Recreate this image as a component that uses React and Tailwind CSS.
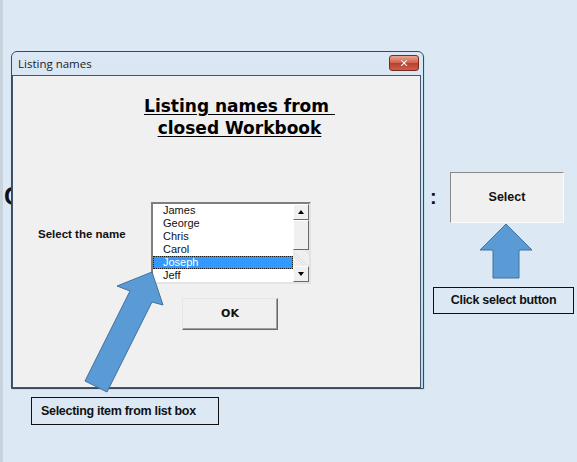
import React from "react";

const names = ["James", "George", "Chris", "Carol", "Joseph", "Jeff"];

const ListBox = () => (
  <div className="flex shrink-0 w-[160px] h-[82px] bg-white border-2 border-t-[#7f7f7f] border-l-[#7f7f7f] border-r-[#e3e3e3] border-b-[#e3e3e3]">
    <div className="flex-1 flex flex-col font-['Liberation_Sans',sans-serif] text-[11px]">
      {names.map((n) => (
        <div
          key={n}
          className={
            n === "Joseph"
              ? "h-[13px] leading-[11px] pl-[9px] bg-[#3399ff] text-white border border-dotted border-[#1a1a1a]"
              : "h-[13px] leading-[13px] pl-[10px] text-[#111]"
          }
        >
          {n}
        </div>
      ))}
    </div>
    <div className="w-[16px] flex flex-col bg-[repeating-linear-gradient(45deg,#f4f4f4_0px,#f4f4f4_1px,#e4e4e4_1px,#e4e4e4_2px)]">
      <div className="h-[16px] flex items-center justify-center bg-[#f0f0f0] border border-t-white border-l-white border-r-[#6a6a6a] border-b-[#6a6a6a]">
        <div className="w-0 h-0 border-l-[3px] border-r-[3px] border-b-[4px] border-l-transparent border-r-transparent border-b-black" />
      </div>
      <div className="h-[30px] bg-[#f0f0f0] border border-t-white border-l-white border-r-[#6a6a6a] border-b-[#6a6a6a]" />
      <div className="flex-1" />
      <div className="h-[16px] flex items-center justify-center bg-[#f0f0f0] border border-t-white border-l-white border-r-[#6a6a6a] border-b-[#6a6a6a]">
        <div className="w-0 h-0 border-l-[3px] border-r-[3px] border-t-[4px] border-l-transparent border-r-transparent border-t-black" />
      </div>
    </div>
  </div>
);

const Dialog = () => (
  <div className="absolute left-[11px] top-[51px] w-[413px] h-[338px] flex flex-col rounded-t-[6px] border border-[#3a4a5e] bg-[linear-gradient(to_bottom,#dbe7f5,#c3d6ed)] shadow-[1px_1px_0_#bfe3ec]">
    <div className="relative h-[23px] flex items-center pl-[6px] text-[11.5px] text-[#1b1b1b] font-['Open_Sans',sans-serif]">
      Listing names
      <div className="absolute right-[4px] top-[3px] w-[30px] h-[16px] rounded-[3px] border border-[#7a2b20] bg-[linear-gradient(to_bottom,#eaa494,#d1604a_50%,#b8402d_51%,#c9604a)] flex items-center justify-center">
        <span className="text-white text-[11px] font-bold leading-none font-['DejaVu_Sans',sans-serif] [text-shadow:0_0_1px_#6b1a10]">
          ✕
        </span>
      </div>
    </div>
    <div className="flex-1 mr-[2px] bg-[#f0f0f0] border border-[#44546a] flex flex-col">
      <div className="pt-[19px] pl-[46px] text-center font-['DejaVu_Sans',sans-serif] font-bold text-[17px] leading-[22px] text-black underline underline-offset-[2px]">
        <div>Listing names from&nbsp;</div>
        <div>closed Workbook</div>
      </div>
      <div className="flex mt-[63px]">
        <div className="w-[138px] shrink-0 pl-[25px] pt-[24px] whitespace-nowrap text-[11.5px] font-bold font-['Liberation_Sans',sans-serif] text-[#111]">
          Select the name
        </div>
        <ListBox />
      </div>
      <button className="mt-[14px] ml-[169px] w-[96px] h-[32px] bg-[#f0f0f0] border border-t-[#e6e6e6] border-l-[#e6e6e6] border-r-[#6a6a6a] border-b-[#6a6a6a] shadow-[inset_-1px_-1px_0_#a0a0a0] text-[11px] font-bold font-['DejaVu_Sans',sans-serif] text-[#111]">
        OK
      </button>
    </div>
  </div>
);

export default function App() {
  return (
    <div className="relative w-[577px] h-[462px] overflow-hidden bg-[#dce9f5] font-['Liberation_Sans',sans-serif]">
      <div className="absolute left-0 top-0 w-[3px] h-full bg-[#c9d3dd]" />
      <span className="absolute left-[4px] top-[184px] text-[25px] font-bold text-[#111] leading-none">
        C
      </span>
      <Dialog />
      <span className="absolute left-[430px] top-[187px] text-[20px] font-bold text-[#111] leading-none">
        :
      </span>
      <div className="absolute left-[450px] top-[172px] w-[114px] h-[51px] flex items-center justify-center bg-[#f0f0f0] border border-t-[#8a8a8a] border-l-[#8a8a8a] border-r-[#fafafa] border-b-[#fafafa] text-[12.5px] font-bold text-[#111]">
        Select
      </div>
      <div className="absolute left-[433px] top-[287px] w-[141px] h-[27px] flex items-center justify-center border border-[#111] text-[12.5px] font-bold text-[#111] tracking-[-0.3px]">
        Click select button
      </div>
      <div className="absolute left-[31px] top-[397px] w-[188px] h-[28px] flex items-center pl-[9px] border border-[#111] text-[12.5px] font-bold text-[#111] tracking-[-0.3px]">
        Selecting item from list box
      </div>
      <svg className="absolute inset-0 pointer-events-none" width="577" height="462" viewBox="0 0 577 462">
        <polygon
          points="152,272 163,305 152,302 107,392 85,381 130,291 117,286"
          fill="#5b9bd5"
          stroke="#41719c"
          strokeWidth="1"
        />
        <polygon
          points="506,224 532,250 519,250 519,278 493,278 493,250 480,250"
          fill="#5b9bd5"
          stroke="#41719c"
          strokeWidth="1"
        />
      </svg>
    </div>
  );
}
